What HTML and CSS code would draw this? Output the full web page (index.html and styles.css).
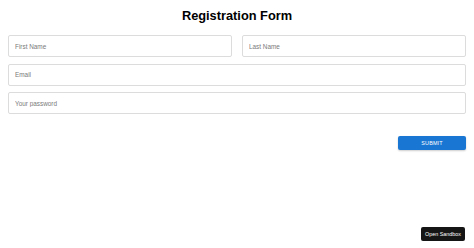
FILE: index.html
```html
<!DOCTYPE html>
<html lang="en">
<head>
<meta charset="utf-8">
<title>Registration Form</title>
<link rel="stylesheet" href="styles.css">
</head>
<body>
<main class="page">
  <h1 class="title">Registration Form</h1>
  <form class="form">
    <div class="row two">
      <input class="field" type="text" placeholder="First Name">
      <input class="field" type="text" placeholder="Last Name">
    </div>
    <input class="field" type="email" placeholder="Email">
    <input class="field" type="password" placeholder="Your password">
    <div class="actions">
      <button class="submit" type="button">SUBMIT</button>
    </div>
  </form>
</main>
<a class="sandbox" href="#">Open Sandbox</a>
</body>
</html>
```
FILE: styles.css
```css
* { box-sizing: border-box; }
html, body { margin: 0; padding: 0; background: #fff; }
body { font-family: "Liberation Sans", Arial, sans-serif; color: #000; }
.page { padding: 8px; }
.title {
  margin: 0 0 12px;
  font-size: 12.8px;
  line-height: 15px;
  font-weight: bold;
  text-align: center;
}
.form { display: flex; flex-direction: column; gap: 6.5px; }
.row.two { display: grid; grid-template-columns: 1fr 1fr; gap: 10px; }
.field {
  display: block;
  width: 100%;
  height: 22px;
  margin: 0;
  padding: 0 6px;
  border: 1px solid #dcdcdc;
  border-radius: 2px;
  background: #fff;
  font-family: "Liberation Sans", Arial, sans-serif;
  font-size: 6.4px;
  color: #333;
  outline: none;
}
.field::placeholder { color: #7a7a7a; opacity: 1; }
.actions { display: flex; justify-content: flex-end; padding-top: 15.5px; }
.submit {
  width: 68px;
  height: 14px;
  margin: 0;
  padding: 0;
  border: none;
  border-radius: 2px;
  background: #1976d2;
  color: #fff;
  font-family: "Liberation Sans", Arial, sans-serif;
  font-size: 5.4px;
  letter-spacing: 0.15px;
  line-height: 14px;
  box-shadow: 0 1px 2px rgba(0,0,0,0.2);
}
.sandbox {
  position: fixed;
  right: 9px;
  bottom: 7px;
  width: 44px;
  height: 14px;
  background: #151515;
  color: #fff;
  border-radius: 2px;
  font-size: 5.4px;
  line-height: 14px;
  text-align: center;
  text-decoration: none;
}
```
